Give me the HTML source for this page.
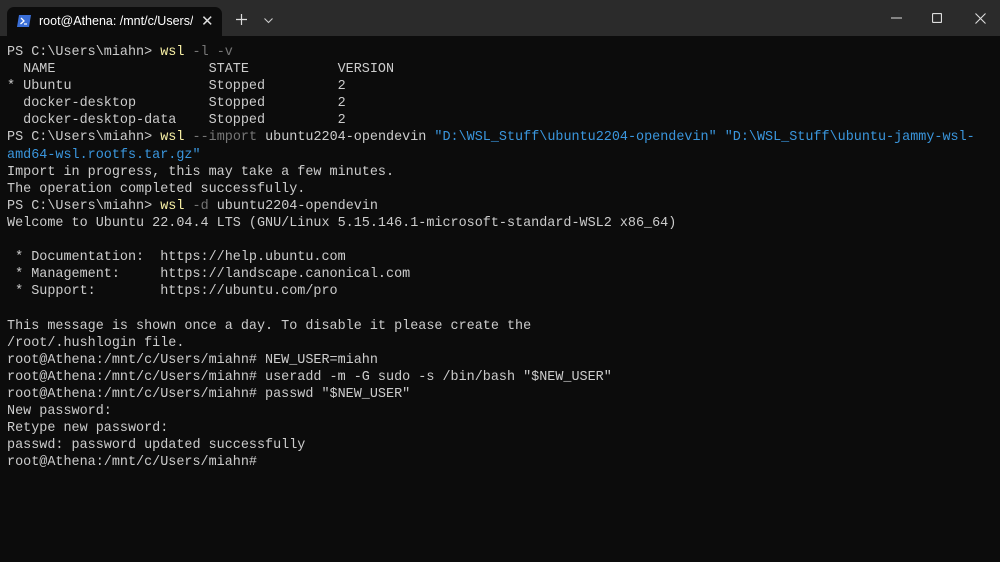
<!DOCTYPE html>
<html><head><meta charset="utf-8"><style>
html,body{margin:0;padding:0;width:1000px;height:562px;overflow:hidden;background:#0c0c0c;font-family:"Liberation Sans",sans-serif}
#bar{position:absolute;left:0;top:0;width:1000px;height:36px;background:#2b2b2b}
#tab{position:absolute;left:7px;top:7px;width:215px;height:29px;background:#0c0c0c;border-radius:7px 7px 0 0}
#tab .t{position:absolute;left:32px;top:7px;font-size:12.5px;color:#fff;white-space:nowrap;width:154px;overflow:hidden}
#tab .x{position:absolute;left:194px;top:5px;color:#ddd;font-size:15px}
#term{position:absolute;left:7px;top:44px;font-family:"Liberation Mono",monospace;font-size:13.45px;line-height:17.1px;color:#cccccc;white-space:pre}
.y{color:#f9f1a5}.g{color:#767676}.b{color:#3a96dd}
</style></head><body>
<div id="bar">
<div id="tab">
<svg style="position:absolute;left:10px;top:8px" width="14" height="12" viewBox="0 0 14 12"><path d="M2 0H14L12 12H0Z" fill="#3a6fd8"/><path d="M4 3L7 6L3.5 9" stroke="#fff" stroke-width="1.3" fill="none"/><path d="M7 9H10" stroke="#fff" stroke-width="1.2"/></svg>
<div class="t">root@Athena: /mnt/c/Users/miahn</div>
<div class="x">✕</div>
</div>
<svg style="position:absolute;left:236px;top:14px" width="11" height="11"><path d="M5.5 0V11M0 5.5H11" stroke="#ddd" stroke-width="1.2"/></svg>
<svg style="position:absolute;left:264px;top:18px" width="9" height="6"><path d="M0.5 0.5L4.5 4.5L8.5 0.5" stroke="#ccc" stroke-width="1.1" fill="none"/></svg>
<svg style="position:absolute;left:891px;top:17px" width="11" height="2"><path d="M0 1H11" stroke="#ddd" stroke-width="1"/></svg>
<svg style="position:absolute;left:932px;top:13px" width="10" height="10"><rect x="0.5" y="0.5" width="9" height="9" fill="none" stroke="#ddd" stroke-width="1.2" rx="1"/></svg>
<svg style="position:absolute;left:975px;top:13px" width="11" height="11"><path d="M0.5 0.5L10.5 10.5M10.5 0.5L0.5 10.5" stroke="#ddd" stroke-width="1.1"/></svg>
</div>
<div id="term">PS C:\Users\miahn&gt; <span class="y">wsl</span> <span class="g">-l -v</span>
  NAME                   STATE           VERSION
* Ubuntu                 Stopped         2
  docker-desktop         Stopped         2
  docker-desktop-data    Stopped         2
PS C:\Users\miahn&gt; <span class="y">wsl</span> <span class="g">--import</span> ubuntu2204-opendevin <span class="b">"D:\WSL_Stuff\ubuntu2204-opendevin"</span> <span class="b">"D:\WSL_Stuff\ubuntu-jammy-wsl-</span>
<span class="b">amd64-wsl.rootfs.tar.gz"</span>
Import in progress, this may take a few minutes.
The operation completed successfully.
PS C:\Users\miahn&gt; <span class="y">wsl</span> <span class="g">-d</span> ubuntu2204-opendevin
Welcome to Ubuntu 22.04.4 LTS (GNU/Linux 5.15.146.1-microsoft-standard-WSL2 x86_64)

 * Documentation:  https://help.ubuntu.com
 * Management:     https://landscape.canonical.com
 * Support:        https://ubuntu.com/pro

This message is shown once a day. To disable it please create the
/root/.hushlogin file.
root@Athena:/mnt/c/Users/miahn# NEW_USER=miahn
root@Athena:/mnt/c/Users/miahn# useradd -m -G sudo -s /bin/bash "$NEW_USER"
root@Athena:/mnt/c/Users/miahn# passwd "$NEW_USER"
New password:
Retype new password:
passwd: password updated successfully
root@Athena:/mnt/c/Users/miahn#</div>
</body></html>
